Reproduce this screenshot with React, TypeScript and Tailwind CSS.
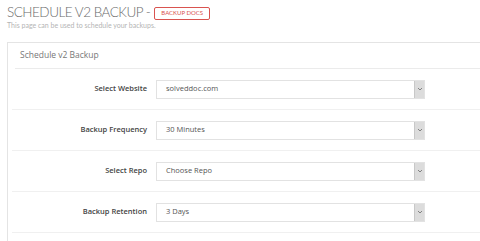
import React from "react";

const rows = [
  { label: "Select Website", value: "solveddoc.com" },
  { label: "Backup Frequency", value: "30 Minutes" },
  { label: "Select Repo", value: "Choose Repo" },
  { label: "Backup Retention", value: "3 Days" },
];

function Arrow() {
  return (
    <div className="w-[10px] self-stretch bg-[#dcdcdc] border-l border-[#c8c8c8] flex items-center justify-center">
      <svg width="6" height="4" viewBox="0 0 6 4">
        <path d="M1 1 L3 3 L5 1" fill="none" stroke="#777" strokeWidth="0.9" />
      </svg>
    </div>
  );
}

export default function App() {
  return (
    <div className="w-[480px] h-[241px] bg-white overflow-hidden" style={{ fontFamily: '"Open Sans", sans-serif' }}>
      <div className="pl-[7px] pt-[4px]">
        <div className="flex items-center h-[17px]">
          <span className="text-[13.5px] font-light text-[#6a6a6a] leading-none tracking-[-0.5px]" style={{ fontFamily: 'Lato, sans-serif' }}>
            SCHEDULE V2 BACKUP -
          </span>
          <span className="ml-[4px] mt-[1px] h-[13px] px-[6px] flex items-center border border-[#d9534f] rounded-[2px] text-[6px] text-[#d9534f] leading-none" style={{ fontFamily: 'Lato, sans-serif' }}>
            BACKUP DOCS
          </span>
        </div>
        <div className="text-[7px] text-[#b4b4b4] leading-none mt-[1px]" style={{ fontFamily: 'Lato, sans-serif' }}>
          This page can be used to schedule your backups.
        </div>
      </div>
      <div className="ml-[7px] mt-[13px] w-[490px] border-t border-l border-[#e4e4e4] h-[200px]">
        <div className="mx-[7px] h-[26px] border-b border-[#ebebeb] flex items-center pl-[5px] text-[8.5px] text-[#777]">
          Schedule v2 Backup
        </div>
        {rows.map((r) => (
          <div key={r.label} className="mx-[4px] h-[41px] border-b border-[#f0f0f0] flex items-center">
            <div className="w-[135px] text-right text-[7.5px] font-semibold text-[#444]">{r.label}</div>
            <div className="ml-[9px] w-[269px] h-[19px] border border-[#e2e2e2] flex items-center">
              <div className="flex-1 pl-[9px] text-[7.5px] text-[#555]">{r.value}</div>
              <Arrow />
            </div>
          </div>
        ))}
      </div>
    </div>
  );
}
